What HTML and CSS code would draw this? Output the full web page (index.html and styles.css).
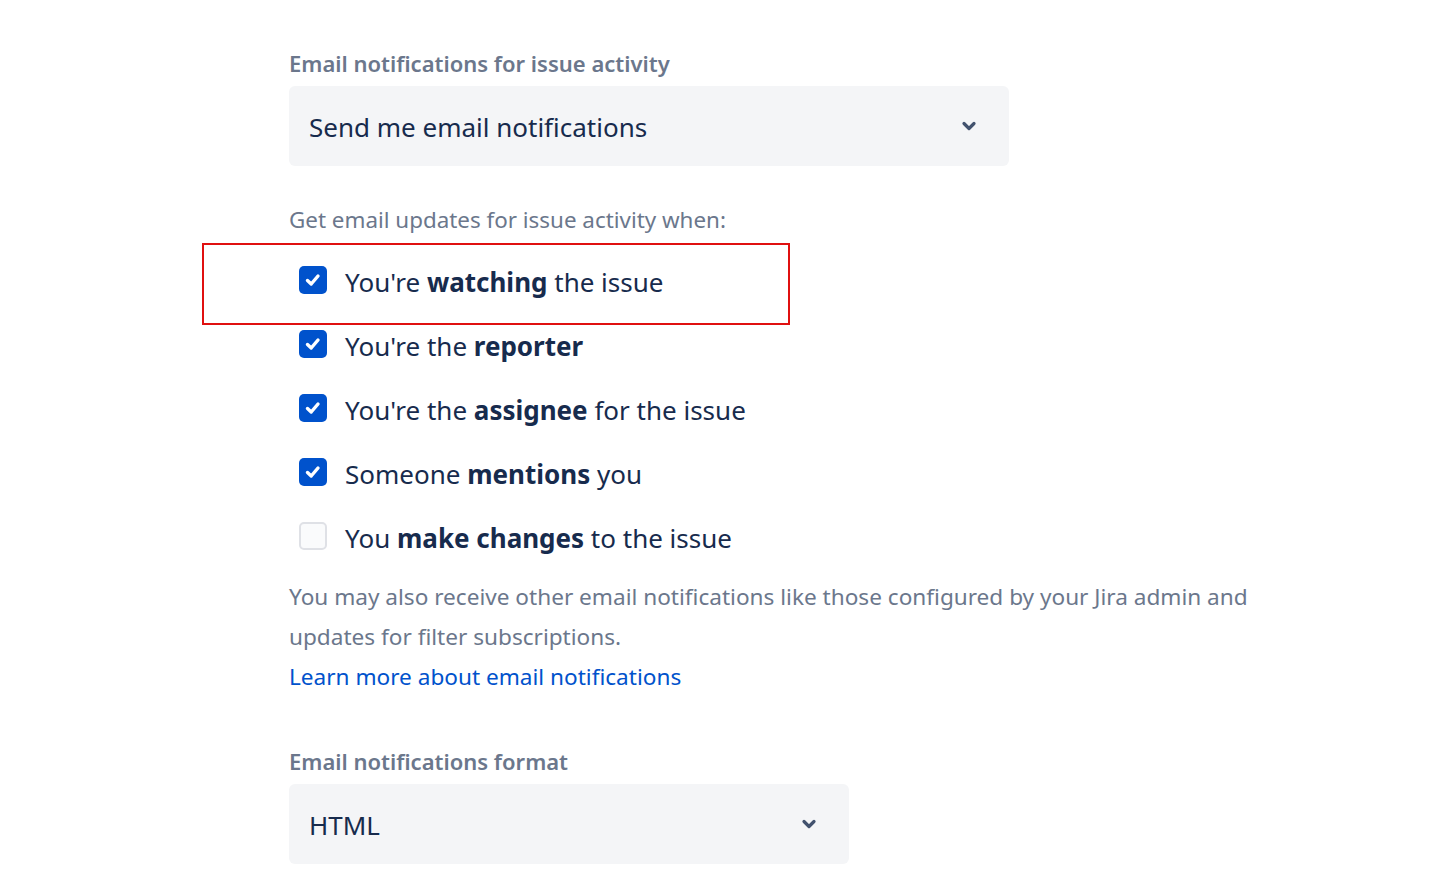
FILE: index.html
```html
<!DOCTYPE html>
<html>
<head>
<meta charset="utf-8">
<link rel="stylesheet" href="styles.css">
</head>
<body>
<main class="page">
  <section class="field">
    <div class="label">Email notifications for issue activity</div>
    <div class="select wide">
      <span>Send me email notifications</span>
      <svg class="chev" width="16" height="12" viewBox="0 0 16 12"><polyline points="3,3.5 8,8.5 13,3.5" fill="none" stroke="#42526E" stroke-width="3.2" stroke-linecap="round" stroke-linejoin="round"/></svg>
    </div>
  </section>

  <p class="hint">Get email updates for issue activity when:</p>

  <ul class="checks">
    <li class="check">
      <span class="box on"><svg viewBox="0 0 28 28" width="28" height="28"><polyline points="8.5,14.5 12.2,18 19,10" fill="none" stroke="#fff" stroke-width="3.4" stroke-linecap="round" stroke-linejoin="round"/></svg></span>
      <span>You're <b>watching</b> the issue</span>
      <span class="annot"></span>
    </li>
    <li class="check">
      <span class="box on"><svg viewBox="0 0 28 28" width="28" height="28"><polyline points="8.5,14.5 12.2,18 19,10" fill="none" stroke="#fff" stroke-width="3.4" stroke-linecap="round" stroke-linejoin="round"/></svg></span>
      <span>You're the <b>reporter</b></span>
    </li>
    <li class="check">
      <span class="box on"><svg viewBox="0 0 28 28" width="28" height="28"><polyline points="8.5,14.5 12.2,18 19,10" fill="none" stroke="#fff" stroke-width="3.4" stroke-linecap="round" stroke-linejoin="round"/></svg></span>
      <span>You're the <b>assignee</b> for the issue</span>
    </li>
    <li class="check">
      <span class="box on"><svg viewBox="0 0 28 28" width="28" height="28"><polyline points="8.5,14.5 12.2,18 19,10" fill="none" stroke="#fff" stroke-width="3.4" stroke-linecap="round" stroke-linejoin="round"/></svg></span>
      <span>Someone <b>mentions</b> you</span>
    </li>
    <li class="check">
      <span class="box off"></span>
      <span>You <b>make changes</b> to the issue</span>
    </li>
  </ul>

  <p class="note">You may also receive other email notifications like those configured by your Jira admin and updates for filter subscriptions.<br><a href="#" class="link">Learn more about email notifications</a></p>

  <section class="field second">
    <div class="label">Email notifications format</div>
    <div class="select narrow">
      <span>HTML</span>
      <svg class="chev" width="16" height="12" viewBox="0 0 16 12"><polyline points="3,3.5 8,8.5 13,3.5" fill="none" stroke="#42526E" stroke-width="3.2" stroke-linecap="round" stroke-linejoin="round"/></svg>
    </div>
  </section>
</main>
</body>
</html>
```

FILE: styles.css
```css
* { box-sizing: border-box; }
html, body { margin: 0; padding: 0; background: #fff; }
body {
  font-family: "Noto Sans", "Open Sans", "Liberation Sans", sans-serif;
  color: #172B4D;
}
.page {
  padding: 47px 0 0 289px;
  width: 1290px;
}
.field { display: flex; flex-direction: column; }
.label {
  font-size: 22px;
  font-weight: 600;
  color: #6B778C;
  line-height: 32px;
  margin-bottom: 7px;
}
.select {
  height: 80px;
  background: #F4F5F7;
  border-radius: 6px;
  display: flex;
  align-items: center;
  justify-content: space-between;
  padding: 0 32px 0 20px;
  font-size: 26px;
  color: #172B4D;
}
.select span { margin-top: 2px; }
.select.wide { width: 720px; }
.select.narrow { width: 560px; }
.chev { flex: none; }
.hint {
  margin: 38px 0 0;
  font-size: 22.4px;
  line-height: 32px;
  color: #6B778C;
}
.checks {
  list-style: none;
  margin: 12px 0 0;
  padding: 0 0 0 10px;
}
.check {
  position: relative;
  display: flex;
  align-items: center;
  gap: 18px;
  height: 64px;
  font-size: 26px;
}
.check > span:nth-child(2) { margin-top: 3px; }
.check b { font-weight: 700; }
.box {
  width: 28px;
  height: 28px;
  border-radius: 5px;
  display: flex;
  align-items: center;
  justify-content: center;
  flex: none;
}
.box.on { background: #0052CC; }
.box.off { background: #FAFBFC; border: 2px solid #DFE1E6; }
.annot {
  position: absolute;
  left: -97px;
  top: -5px;
  width: 588px;
  height: 82px;
  border: 2px solid #E01010;
  pointer-events: none;
}
.note {
  margin: 9px 0 0;
  font-size: 22.6px;
  line-height: 40px;
  color: #6B778C;
  max-width: 975px;
}
.link { color: #0052CC; text-decoration: none; }
.second { margin-top: 48px; }
```
